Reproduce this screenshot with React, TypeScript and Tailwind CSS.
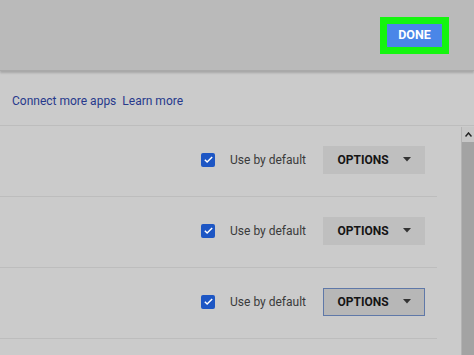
export default function App() {
  const rows = [false, false, true];

  return (
    <div
      className="w-[474px] h-[355px] overflow-hidden bg-[#cbcbcb] flex flex-col"
      style={{ fontFamily: "Roboto, 'Liberation Sans', sans-serif" }}
    >
      {/* HEADER */}
      <div className="h-[71px] shrink-0 bg-[#bababa] flex items-center justify-end pr-[25px] shadow-[0_2px_2px_rgba(0,0,0,0.18)] relative z-10 border-b border-[#a9a9a9]">
        <div className="mt-[1px] bg-[#14f50f] p-[7px] w-[69px] h-[37px]">
          <button className="w-full h-full bg-[#4a86e8] text-white text-[12.5px] font-bold flex items-center justify-center">
            DONE
          </button>
        </div>
      </div>

      {/* LINKS */}
      <div className="h-[55px] shrink-0 flex items-center pl-[12px] pt-[6px] border-b border-[#bdbdbd] text-[12px] text-[#27398c]">
        <span>Connect more apps</span>
        <span className="ml-[6px]">Learn more</span>
      </div>

      {/* LIST */}
      <div className="flex flex-1 min-h-0">
        <div className="flex-1">
          {rows.map((focused, i) => (
            <div
              key={i}
              className="h-[71px] mr-[24px] border-b border-[#bdbdbd] flex items-center justify-end pr-[12px] pb-[3px]"
            >
              <div className="w-[14px] h-[14px] rounded-[2px] bg-[#1d56c4] flex items-center justify-center mr-[15px]">
                <svg width="11" height="11" viewBox="0 0 24 24" fill="none">
                  <path d="M4 12.5l5 5L20 6.5" stroke="white" strokeWidth="3.2" />
                </svg>
              </div>
              <span className="text-[12px] text-[#3a3a3a] mr-[17px]">Use by default</span>
              <button
                className={
                  focused
                    ? "w-[102px] h-[28px] bg-[#b7b7b7] border border-[#5f78a8] flex items-center justify-center gap-[14px] text-[12px] font-bold text-[#151515]"
                    : "w-[102px] h-[28px] bg-[#bfbfbf] flex items-center justify-center gap-[14px] text-[12px] font-bold text-[#151515]"
                }
              >
                <span>OPTIONS</span>
                <svg width="8" height="5" viewBox="0 0 8 5">
                  <path d="M0 0h8L4 4.5z" fill="#333" />
                </svg>
              </button>
            </div>
          ))}
        </div>

        {/* SCROLLBAR */}
        <div className="w-[13px] shrink-0 border-l border-[#b3b3b3] flex flex-col mt-[1px]">
          <div className="h-[15px] bg-[#c7c7c7] flex items-center justify-center">
            <svg width="7" height="5" viewBox="0 0 7 5">
              <path d="M0.5 4.5L3.5 1l3 3.5" stroke="#222" strokeWidth="1.5" fill="none" />
            </svg>
          </div>
          <div className="flex-1 bg-[#a3a3a3]" />
        </div>
      </div>
    </div>
  );
}
